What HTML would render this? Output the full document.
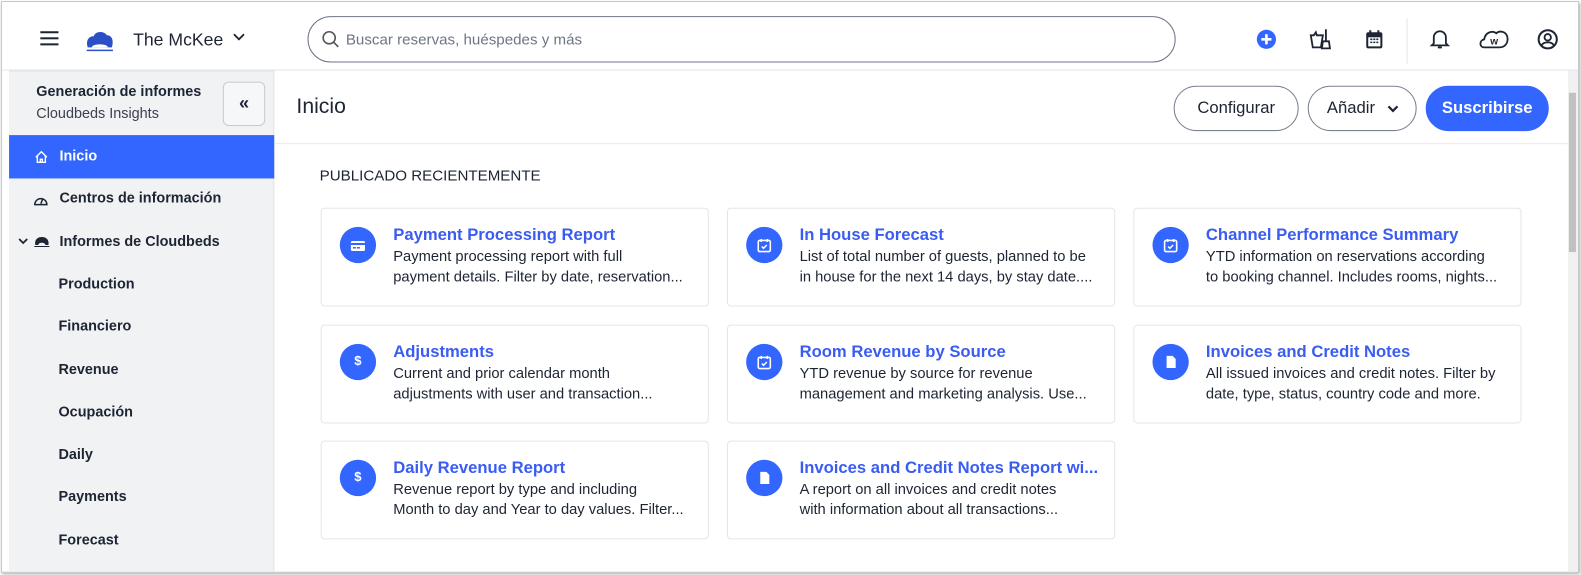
<!DOCTYPE html><html><head><style>
*{box-sizing:border-box;margin:0;padding:0}
body{width:1581px;height:575px;background:#fff;font-family:"Liberation Sans",sans-serif;position:relative;overflow:hidden;color:#1d2433}
.frame{position:absolute;left:1px;top:1px;width:1565px;height:567px;border:1px solid #c8c8c8;box-shadow:1px 2px 3px #aaa;background:#fff;overflow:hidden;transform:scale(1.0083);transform-origin:0 0}
.abs{position:absolute}
.side{position:absolute;left:7px;top:68px;width:263px;height:500px;background:#f1f2f4;border-right:1px solid #e2e4e8;border-top:1px solid #e2e4e8}
.si{position:absolute;left:49px;font-size:14.3px;font-weight:bold;color:#1d2433}
.card{position:absolute;width:385px;height:98px;border:1px solid #e3e5e9;border-radius:4px;background:#fff}
.card .ic{position:absolute;left:18px;top:18px;width:36px;height:36px;border-radius:50%;background:#3366ff}
.card .t{position:absolute;left:71px;top:17px;font-size:16.5px;font-weight:bold;color:#3a5cf0;white-space:nowrap}
.card .d{position:absolute;left:71px;top:38px;font-size:14.6px;line-height:20px;color:#1d2433;width:310px;white-space:nowrap}
.btn{position:absolute;top:83px;height:45px;border:1px solid #7a8190;border-radius:23px;font-size:16.5px;display:flex;align-items:center;justify-content:center}
</style></head><body><div class="frame">
<div class="abs" style="left:38px;top:29px;width:18px;height:2px;background:#1d2433;box-shadow:0 6px 0 #1d2433,0 12px 0 #1d2433"></div>
<svg class="abs" style="left:82px;top:26px" width="30" height="24" viewBox="0 0 30 24"><path d="M3 19 C1 12 4 8 9 8 C10 3 19 2 22 7 C27 7 29 12 27 19 Z" fill="#2b4fc7"/><path d="M7 19 C7 15 23 15 23 19Z" fill="#fff"/><path d="M2 22 H28" stroke="#2b4fc7" stroke-width="1.5"/></svg>
<div class="abs" style="left:130px;top:27px;font-size:17.5px;color:#1d2433">The McKee</div>
<svg class="abs" style="left:229px;top:31px" width="12" height="8"><path d="M1 1 L6 6 L11 1" stroke="#1d2433" stroke-width="1.8" fill="none"/></svg>
<div class="abs" style="left:303px;top:14px;width:861px;height:46px;border:1px solid #6e7585;border-radius:23px"></div>
<svg class="abs" style="left:317px;top:28px" width="18" height="18"><circle cx="7.5" cy="7.5" r="6" stroke="#555" stroke-width="1.6" fill="none"/><path d="M12 12 L16.5 16.5" stroke="#555" stroke-width="1.6"/></svg>
<div class="abs" style="left:341px;top:29px;font-size:15px;color:#6e7585">Buscar reservas, huéspedes y más</div>
<svg class="abs" style="left:1244px;top:27px" width="20" height="20"><circle cx="10" cy="10" r="9.5" fill="#3366ff"/><path d="M10 5V15M5 10H15" stroke="#fff" stroke-width="2.6"/></svg>
<svg class="abs" style="left:1296px;top:26px" width="24" height="22"><path d="M2 7 L5 7 L7 4 L8 7 L14 7 L12 19 L4 19 Z" stroke="#1d2433" stroke-width="1.8" fill="none"/><path d="M17 1V12M13 20 L14 13 H20 L21 20Z" stroke="#1d2433" stroke-width="1.8" fill="none"/></svg>
<svg class="abs" style="left:1352px;top:27px" width="18" height="20"><rect x="1" y="3" width="16" height="16" rx="2" fill="#1d2433"/><rect x="3" y="8" width="12" height="9" fill="#fff"/><path d="M5 1V4M13 1V4" stroke="#1d2433" stroke-width="2"/><path d="M5 10h2M8 10h2M11 10h2M5 13h2M8 13h2M11 13h2" stroke="#1d2433" stroke-width="1.5"/></svg>
<div class="abs" style="left:1393px;top:16px;width:1px;height:45px;background:#e2e4e8"></div>
<svg class="abs" style="left:1416px;top:26px" width="20" height="22"><path d="M4 15 V9 A6 6 0 0 1 16 9 V15 L18 17 H2 Z" stroke="#1d2433" stroke-width="1.8" fill="none"/><path d="M8 19 H12" stroke="#1d2433" stroke-width="2"/></svg>
<svg class="abs" style="left:1465px;top:27px" width="30" height="20"><path d="M5 18 C0 18 0 11 5 10 C6 3 13 1 17 4 C20 1 27 2 28 8 C29 13 26 18 20 18 Z" stroke="#1d2433" stroke-width="1.8" fill="none"/><text x="11" y="15" font-size="10" font-family="Liberation Sans" font-weight="bold" fill="#1d2433">w</text></svg>
<svg class="abs" style="left:1522px;top:26px" width="22" height="22"><circle cx="11" cy="11" r="9" stroke="#1d2433" stroke-width="2" fill="none"/><circle cx="11" cy="9" r="3.2" stroke="#1d2433" stroke-width="1.8" fill="none"/><path d="M5 17 C7 13 15 13 17 17" stroke="#1d2433" stroke-width="1.8" fill="none"/></svg>
<div class="abs" style="left:0;top:67px;width:1565px;height:1px;background:#e2e4e8"></div>
<div class="side">
<div class="abs" style="left:27px;top:12px;font-size:14.3px;font-weight:bold">Generación de informes</div>
<div class="abs" style="left:27px;top:34px;font-size:14.3px;color:#3a4150">Cloudbeds Insights</div>
<div class="abs" style="left:212px;top:10px;width:42px;height:44px;border:1px solid #c5c9d1;border-radius:6px;background:#f6f7f8;text-align:center;line-height:40px;font-size:18px;font-weight:bold">«</div>
<div class="abs" style="left:0;top:63px;width:263px;height:43px;background:#3366ff"></div>
<svg class="abs" style="left:25px;top:78px" width="14" height="13"><path d="M1.5 7 L7 1.5 L12.5 7 M3 6V12H11V6 M6 12V9H8V12" stroke="#fff" stroke-width="1.4" fill="none"/></svg>
<div class="si" style="top:76px;left:50px;color:#fff">Inicio</div>
<svg class="abs" style="left:24px;top:120px" width="15" height="13"><path d="M1.5 12 A6 6 0 1 1 13.5 12 Z" stroke="#1d2433" stroke-width="1.5" fill="none"/><path d="M7.5 11 L9.5 6" stroke="#1d2433" stroke-width="1.5"/></svg>
<div class="si" style="top:118px;left:50px">Centros de información</div>
<svg class="abs" style="left:9px;top:165px" width="10" height="7"><path d="M1 1 L5 5 L9 1" stroke="#1d2433" stroke-width="1.8" fill="none"/></svg>
<svg class="abs" style="left:24px;top:162px" width="17" height="12"><path d="M2 10 C1 5 4 2 8.5 2 C13 2 16 5 15 10 Z" fill="#1d2433"/><path d="M5 10 C5 7 12 7 12 10Z" fill="#f1f2f4"/><path d="M1 11.5 H16" stroke="#1d2433"/></svg>
<div class="si" style="top:161px;left:50px">Informes de Cloudbeds</div>
<div class="si" style="top:203px">Production</div>
<div class="si" style="top:245px">Financiero</div>
<div class="si" style="top:288px">Revenue</div>
<div class="si" style="top:330px">Ocupación</div>
<div class="si" style="top:372px">Daily</div>
<div class="si" style="top:414px">Payments</div>
<div class="si" style="top:457px">Forecast</div>
</div>
<div class="abs" style="left:292px;top:92px;font-size:21px;color:#1d2433">Inicio</div>
<div class="btn" style="left:1162px;width:124px">Configurar</div>
<div class="btn" style="left:1295px;width:108px;justify-content:flex-start;padding-left:18px">Añadir<svg style="margin-left:12px" width="11" height="8"><path d="M1 1.5 L5.5 6 L10 1.5" stroke="#1d2433" stroke-width="2.2" fill="none"/></svg></div>
<div class="btn" style="left:1412px;width:122px;background:#3366ff;border-color:#3366ff;color:#fff;font-weight:bold">Suscribirse</div>
<div class="abs" style="left:270px;top:140px;width:1285px;height:1px;background:#e6e8eb"></div>
<div class="abs" style="left:1553px;top:68px;width:10px;height:500px;background:#f1f1f1"></div>
<div class="abs" style="left:1554px;top:90px;width:7px;height:158px;background:#c1c1c1"></div>
<div class="abs" style="left:315px;top:164px;font-size:15px;color:#1d2433">PUBLICADO RECIENTEMENTE</div>

<div class="card" style="left:316px;top:204px"><div class="ic"></div><svg class="abs" style="left:28px;top:31px" width="16" height="12"><rect x="1" y="1" width="14" height="10" rx="1.5" fill="#fff"/><rect x="1" y="3" width="14" height="2" fill="#3366ff"/><rect x="3" y="7" width="3" height="1.5" fill="#3366ff"/><rect x="7" y="7" width="3" height="1.5" fill="#3366ff"/></svg><div class="t">Payment Processing Report</div><div class="d">Payment processing report with full<br>payment details. Filter by date, reservation...</div></div>
<div class="card" style="left:719px;top:204px"><div class="ic"></div><svg class="abs" style="left:29px;top:29px" width="14" height="15"><rect x="1" y="2.5" width="12" height="11" rx="1.5" stroke="#fff" stroke-width="1.6" fill="none"/><path d="M4 1V4M10 1V4M4.5 8.5 L6.3 10.3 L9.5 7" stroke="#fff" stroke-width="1.5" fill="none"/></svg><div class="t">In House Forecast</div><div class="d">List of total number of guests, planned to be<br>in house for the next 14 days, by stay date....</div></div>
<div class="card" style="left:1122px;top:204px"><div class="ic"></div><svg class="abs" style="left:29px;top:29px" width="14" height="15"><rect x="1" y="2.5" width="12" height="11" rx="1.5" stroke="#fff" stroke-width="1.6" fill="none"/><path d="M4 1V4M10 1V4M4.5 8.5 L6.3 10.3 L9.5 7" stroke="#fff" stroke-width="1.5" fill="none"/></svg><div class="t">Channel Performance Summary</div><div class="d">YTD information on reservations according<br>to booking channel. Includes rooms, nights...</div></div>

<div class="card" style="left:316px;top:320px"><div class="ic"></div><div class="abs" style="left:18px;top:27px;width:36px;text-align:center;color:#fff;font-weight:bold;font-size:13px">$</div><div class="t">Adjustments</div><div class="d">Current and prior calendar month<br>adjustments with user and transaction...</div></div>
<div class="card" style="left:719px;top:320px"><div class="ic"></div><svg class="abs" style="left:29px;top:29px" width="14" height="15"><rect x="1" y="2.5" width="12" height="11" rx="1.5" stroke="#fff" stroke-width="1.6" fill="none"/><path d="M4 1V4M10 1V4M4.5 8.5 L6.3 10.3 L9.5 7" stroke="#fff" stroke-width="1.5" fill="none"/></svg><div class="t">Room Revenue by Source</div><div class="d">YTD revenue by source for revenue<br>management and marketing analysis. Use...</div></div>
<div class="card" style="left:1122px;top:320px"><div class="ic"></div><svg class="abs" style="left:31px;top:29px" width="11" height="14"><path d="M1 1 H7 L10 4 V13 H1 Z" fill="#fff"/></svg><div class="t">Invoices and Credit Notes</div><div class="d">All issued invoices and credit notes. Filter by<br>date, type, status, country code and more.</div></div>

<div class="card" style="left:316px;top:435px"><div class="ic"></div><div class="abs" style="left:18px;top:27px;width:36px;text-align:center;color:#fff;font-weight:bold;font-size:13px">$</div><div class="t">Daily Revenue Report</div><div class="d">Revenue report by type and including<br>Month to day and Year to day values. Filter...</div></div>
<div class="card" style="left:719px;top:435px"><div class="ic"></div><svg class="abs" style="left:31px;top:29px" width="11" height="14"><path d="M1 1 H7 L10 4 V13 H1 Z" fill="#fff"/></svg><div class="t">Invoices and Credit Notes Report wi...</div><div class="d">A report on all invoices and credit notes<br>with information about all transactions...</div></div>
</div></body></html>
